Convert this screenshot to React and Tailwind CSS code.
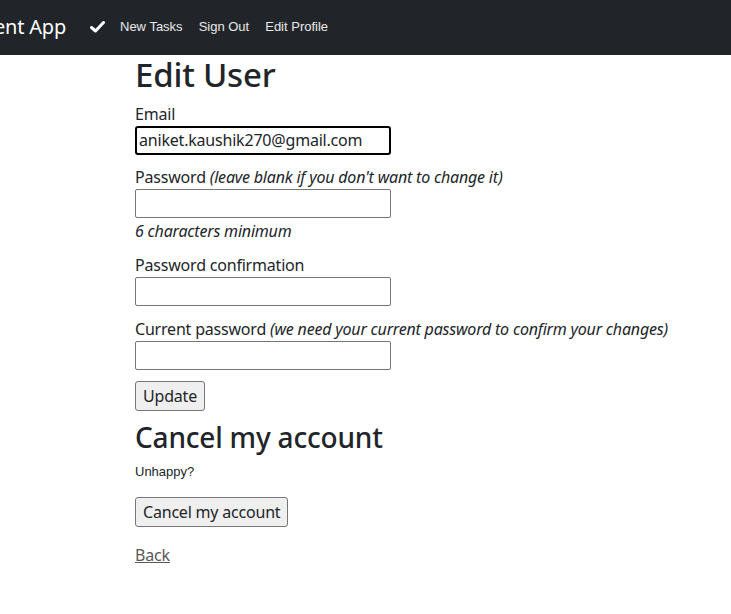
import React from "react";

const font = { fontFamily: "'Noto Sans', 'Open Sans', sans-serif", letterSpacing: "-0.2px" };
const arial = { fontFamily: "'Liberation Sans', Arial, sans-serif", letterSpacing: "0" };

const Field = ({ label, hint, className = "mt-[10px]", children }) => (
  <div className={className}>
    <label className="block leading-6">
      {label} {hint && <em>{hint}</em>}
    </label>
    {children}
  </div>
);

const TextInput = ({ className = "", ...props }) => (
  <input
    {...props}
    className={`block w-[256px] h-[29px] px-[2px] border border-[#767676] rounded-[2px] text-[16px] bg-white focus:outline-none ${className}`}
  />
);

export default function App() {
  return (
    <div className="min-h-[614px] bg-white text-[#212529]" style={font}>
      {/* Navbar */}
      <nav className="h-[55px] bg-[#212529] flex items-center overflow-hidden">
        <div className="w-[66px] overflow-hidden flex justify-end shrink-0">
          <span className="whitespace-nowrap text-[20px] text-white -mt-[2px]">
            Task Management App
          </span>
        </div>
        <svg
          className="ml-[24px] shrink-0 -mt-[2px]"
          width="15"
          height="12"
          viewBox="0 0 15 12"
          fill="none"
        >
          <path
            d="M1.5 6.5 L5.5 10 L13.5 1.5"
            stroke="white"
            strokeWidth="3"
            strokeLinecap="round"
            strokeLinejoin="round"
          />
        </svg>
        <div
          className="flex items-center gap-4 ml-[15px] -mt-[2px] text-[13px] text-white/90"
          style={arial}
        >
          <a>New Tasks</a>
          <a>Sign Out</a>
          <a>Edit Profile</a>
        </div>
      </nav>

      {/* Form */}
      <main className="pl-[135px]">
        <h1 className="text-[33px] font-medium leading-[1.2] mb-[7px]">Edit User</h1>

        <div>
          <label className="block leading-6">Email</label>
          <input
            defaultValue="aniket.kaushik270@gmail.com"
            className="block w-[256px] h-[29px] px-[2px] border-2 border-black rounded-[3px] text-[16px] bg-white focus:outline-none"
          />
        </div>

        <Field
          className="mt-[10px]"
          label="Password"
          hint="(leave blank if you don't want to change it)"
        >
          <TextInput type="password" />
          <em className="block leading-6 mt-[1px]">6 characters minimum</em>
        </Field>

        <Field className="mt-[10px]" label="Password confirmation">
          <TextInput type="password" />
        </Field>

        <Field
          className="mt-[11px]"
          label="Current password"
          hint="(we need your current password to confirm your changes)"
        >
          <TextInput type="password" />
        </Field>

        <button className="mt-[11px] h-[30px] px-[7px] bg-[#efefef] border border-[#767676] rounded-[3px] text-[16px]">
          Update
        </button>

        <h2 className="mt-[10px] text-[28px] font-medium leading-[1.2]">
          Cancel my account
        </h2>
        <p className="mt-[8px] text-[13px]" style={arial}>
          Unhappy?
        </p>
        <button className="mt-[15px] h-[30px] px-[7px] bg-[#efefef] border border-[#767676] rounded-[3px] text-[16px]">
          Cancel my account
        </button>
        <div className="mt-[16px]">
          <a href="#" className="underline text-[#595959]">
            Back
          </a>
        </div>
      </main>
    </div>
  );
}
